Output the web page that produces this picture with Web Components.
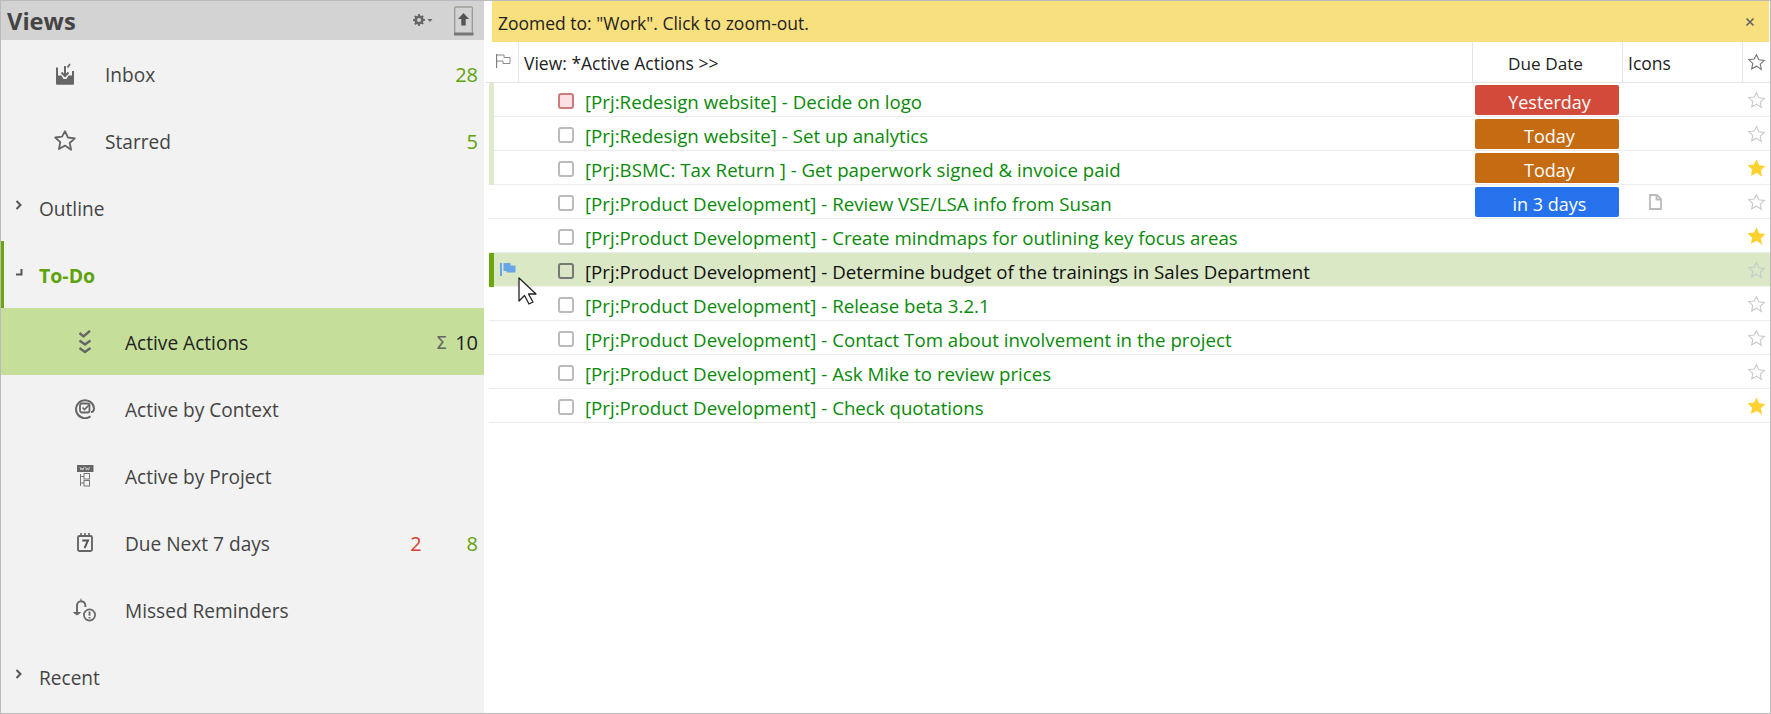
<!DOCTYPE html>
<html>
<head>
<meta charset="utf-8">
<title>Views</title>
<style>
  html, body { margin: 0; height: 100%; background: #fff; }
  body { font-family: "Open Sans", "Liberation Sans", sans-serif; }
</style>
</head>
<body>

<todo-app>
  <view-panel slot="side">
    <view-row icon="inbox" count="28">Inbox</view-row>
    <view-row icon="star" count="5">Starred</view-row>
    <view-row group="closed">Outline</view-row>
    <view-row group="open" current>To-Do</view-row>
    <view-row icon="actions" sub selected sigma count="10">Active Actions</view-row>
    <view-row icon="context" sub>Active by Context</view-row>
    <view-row icon="project" sub>Active by Project</view-row>
    <view-row icon="calendar" sub red="2" count="8">Due Next 7 days</view-row>
    <view-row icon="bell" sub>Missed Reminders</view-row>
    <view-row group="closed">Recent</view-row>
  </view-panel>
  <task-list slot="main">
    <zoom-banner>Zoomed to: "Work". Click to zoom-out.</zoom-banner>
    <list-head>View: *Active Actions &gt;&gt;</list-head>
    <task-row mark="soft" box="overdue" due="Yesterday" tone="red">[Prj:Redesign website] - Decide on logo</task-row>
    <task-row mark="soft" due="Today" tone="orange">[Prj:Redesign website] - Set up analytics</task-row>
    <task-row mark="soft" due="Today" tone="orange" starred>[Prj:BSMC: Tax Return ] - Get paperwork signed &amp; invoice paid</task-row>
    <task-row due="in 3 days" tone="blue" note>[Prj:Product Development] - Review VSE/LSA info from Susan</task-row>
    <task-row starred>[Prj:Product Development] - Create mindmaps for outlining key focus areas</task-row>
    <task-row active>[Prj:Product Development] - Determine budget of the trainings in Sales Department</task-row>
    <task-row>[Prj:Product Development] - Release beta 3.2.1</task-row>
    <task-row>[Prj:Product Development] - Contact Tom about involvement in the project</task-row>
    <task-row>[Prj:Product Development] - Ask Mike to review prices</task-row>
    <task-row starred>[Prj:Product Development] - Check quotations</task-row>
  </task-list>
</todo-app>

<script>
const STAR = 'M12 2.2l2.9 6.3 6.9.8-5.1 4.7 1.4 6.8L12 16.6l-6.1 3.4 1.4-6.8-5.1-4.7 6.9-.8z';

const ICONS = {
  inbox: `<svg width="18" height="22" viewBox="0 0 18 22"><path d="M1 4.500V20.500H17V8" fill="none" stroke="#666" stroke-width="2"/><path d="M1 12.500h4.500l2 3.500h3l2-3.500H17v9H1z" fill="#666"/><path d="M9 3v10M5.500 9.500L9 13l3.500-3.500" fill="none" stroke="#666" stroke-width="2"/><path d="M11.500 4.500L14 1" stroke="#666" stroke-width="1.600"/></svg>`,
  star: `<svg width="24" height="24" viewBox="0 0 24 24"><path d="${STAR}" fill="none" stroke="#666" stroke-width="1.800" stroke-linejoin="round"/></svg>`,
  actions: `<svg width="14" height="24" viewBox="0 0 14 24"><path d="M1.500 3l4 3.500L12 .8M1.500 10.500l5.500 4 5.500-4M1.500 18l5.500 4 5.500-4" fill="none" stroke="#666" stroke-width="2.400"/></svg>`,
  context: `<svg width="20" height="21" viewBox="0 0 20 21"><path d="M15.500 18.400A9 9 0 1 1 19 10.200c0 2.400-1.200 3.800-3 3.800" fill="none" stroke="#666" stroke-width="2"/><rect x="5" y="5.500" width="9.500" height="9" rx="2" fill="none" stroke="#666" stroke-width="1.800"/><path d="M7.500 9.500l2 2 4.500-4.500" fill="none" stroke="#666" stroke-width="1.700"/></svg>`,
  project: `<svg width="17" height="22" viewBox="0 0 17 22"><rect x="0" y="0" width="16.500" height="7" fill="#666"/><path d="M3 2l1 3 1-2 1 2 1-3M8.500 2l1 3 1-2 1 2 1-3" fill="none" stroke="#ddd" stroke-width=".8"/><path d="M3.500 9v12M3.500 11.500H7M3.500 18H7" fill="none" stroke="#777" stroke-width="1"/><rect x="7" y="8.500" width="5.500" height="5.500" fill="none" stroke="#777" stroke-width="1"/><rect x="7" y="15.500" width="5.500" height="5.500" fill="none" stroke="#777" stroke-width="1"/></svg>`,
  calendar: `<svg width="16" height="19" viewBox="0 0 16 19"><rect x="1" y="3" width="14" height="15" rx="1.500" fill="none" stroke="#666" stroke-width="1.900"/><path d="M4 0v3M8 0v3M12 0v3" stroke="#666" stroke-width="1.600"/><path d="M5.200 7.500h5.800L7.600 15" fill="none" stroke="#555" stroke-width="1.900"/></svg>`,
  bell: `<svg width="24" height="24" viewBox="0 0 24 24"><path d="M4 14V7.500a4.200 4.200 0 0 1 8.400 0V9" fill="none" stroke="#666" stroke-width="1.900"/><path d="M.5 14.500h7L4 17zM8 .6v3" fill="#666" stroke="#666"/><circle cx="16.500" cy="17" r="5.600" fill="none" stroke="#666" stroke-width="1.700"/><path d="M16.500 13.500v4.200M16.500 19v1.600" stroke="#666" stroke-width="1.800"/></svg>`
};

class TodoApp extends HTMLElement {
  constructor() {
    super();
    this.attachShadow({ mode: 'open' });
    this.shadowRoot.innerHTML = `
      <style>
        :host { display: grid; grid-template-columns: 483px 1fr; column-gap: 1px; width: 1771px; height: 714px; box-sizing: border-box;
                border: 1px solid #bbb; overflow: hidden; position: relative; background: #fff; }
      </style>
      <slot name="side"></slot>
      <slot name="main"></slot>`;
  }
}

class ViewPanel extends HTMLElement {
  constructor() {
    super();
    this.attachShadow({ mode: 'open' });
    this.shadowRoot.innerHTML = `
      <style>
        :host { display: block; background: #f2f2f2; height: 100%; overflow: hidden; }
        header { height: 39px; background: #d3d3d3; display: flex; align-items: center; padding-left: 6px; box-sizing: border-box; }
        h1 { margin: 0; font: 700 23.7px "Open Sans", sans-serif; color: #444; flex: 1; }
        .gear { display: flex; margin-right: 20px; margin-top: -1px; }
        .pin { width: 21px; height: 30px; margin-right: 10px; display: flex; }
      </style>
      <header>
        <h1>Views</h1>
        <span class="gear">
          <svg width="20" height="12" viewBox="0 0 20 12"><path fill="#666" d="M5.200 0h1.600l.3 1.600 1.200.5L9.700 1.200l1.100 1.100-.9 1.300.5 1.200 1.600.3v1.600l-1.600.3-.5 1.200.9 1.300-1.100 1.100-1.400-.9-1.200.5L6.800 12H5.200l-.3-1.500-1.200-.5-1.400.9L1.200 9.800l.9-1.300-.5-1.200L0 6.900V5.300l1.600-.3.5-1.200-.9-1.300 1.100-1.100 1.400.9 1.200-.5zM6 4a2 2 0 1 0 0 4 2 2 0 0 0 0-4z"/><path fill="#666" d="M14.500 5h5l-2.500 3z"/></svg>
        </span>
        <span class="pin">
          <svg width="21" height="30" viewBox="0 0 21 30"><path d="M2.500 1h16l.8.8V28H1.700V1.800z" fill="#d3d3d3" stroke="#9aa094" stroke-width="1.400"/><rect x="1" y="26.500" width="19.500" height="3" fill="#777"/><path d="M10.500 7l5.500 6h-3.300v6.500H8.300V13H5z" fill="#555"/></svg>
        </span>
      </header>
      <slot></slot>`;
  }
}

class ViewRow extends HTMLElement {
  constructor() {
    super();
    this.attachShadow({ mode: 'open' });
  }

  connectedCallback() {
    const group = this.getAttribute('group');
    const icon = this.getAttribute('icon');
    const red = this.getAttribute('red');
    const count = this.getAttribute('count');
    let lead = '';
    if (group === 'closed') {
      lead = `<svg class="twist" width="8" height="10" viewBox="0 0 8 10"><path d="M1.500 1l4 4-4 4" fill="none" stroke="#555" stroke-width="2"/></svg>`;
    } else if (group === 'open') {
      lead = `<svg class="twist" width="8" height="8" viewBox="0 0 8 8"><path d="M1 6.500h5.500V1" fill="none" stroke="#555" stroke-width="2"/></svg>`;
    } else {
      lead = `<span class="ico">${ICONS[icon]}</span>`;
    }
    this.shadowRoot.innerHTML = `
      <style>
        :host { display: flex; align-items: center; height: 67px; box-sizing: border-box; padding-right: 6px;
                color: #444; font: 19.1px "Open Sans", sans-serif; position: relative; }
        :host([current]) { color: #5fa30a; font-weight: 700; font-size: 19.5px; box-shadow: inset 3px 0 0 #6aa70c; }
        :host([selected]) { background: #c5df9a; color: #222; }
        .ico { width: 104px; padding-left: 52px; padding-right: 28px; box-sizing: border-box; display: flex; justify-content: center; }
        :host([sub]) .ico { width: 124px; padding-left: 68px; padding-right: 24px; }
        .twist { margin: -6px 16px 0 14px; }
        .label { flex: 1; margin-top: 2px; }
        .count { color: #5fa30a; font-size: 20px; margin-top: 2px; }
        :host([selected]) .count { color: #222; }
        .red { color: #d9402f; font-size: 20px; margin: 2px 45px 0 0; }
        .sigma { color: #666; font: 18px "DejaVu Sans", sans-serif; margin: 1px 8px 0 0; }
      </style>
      ${lead}
      <span class="label"><slot></slot></span>
      ${this.hasAttribute('sigma') ? '<span class="sigma">Σ</span>' : ''}
      ${red ? `<span class="red">${red}</span>` : ''}
      ${count ? `<span class="count">${count}</span>` : ''}`;
  }
}

class TaskList extends HTMLElement {
  constructor() {
    super();
    this.attachShadow({ mode: 'open' });
    this.shadowRoot.innerHTML = `
      <style>
        :host { display: flex; flex-direction: column; height: 100%; position: relative; font: 18.7px "Open Sans", sans-serif; min-width: 0; }
        .cursor { position: absolute; left: 33px; top: 276px; }
      </style>
      <slot></slot>
      <svg class="cursor" width="19" height="28" viewBox="0 0 19 28"><path d="M1 1v23l5.500-5.500 4.500 8.500 4-2-4.500-8H18z" fill="#fff" stroke="#222" stroke-width="1.300" stroke-linejoin="round"/></svg>`;
  }
}

class ZoomBanner extends HTMLElement {
  constructor() {
    super();
    this.attachShadow({ mode: 'open' });
    this.shadowRoot.innerHTML = `
      <style>
        :host { display: flex; align-items: center; justify-content: space-between; height: 41px; margin: 0 1px 0 7px; padding: 3px 14px 0 6px;
                box-sizing: border-box; background: #f9e07f; color: #222; font-size: 17.5px; }
        svg { display: block; margin-top: -3px; }
      </style>
      <span><slot></slot></span>
      <svg width="10" height="10" viewBox="0 0 10 10"><path d="M1.500 1.500l7 7M8.500 1.500l-7 7" stroke="#666" stroke-width="1.700"/></svg>`;
  }
}

class ListHead extends HTMLElement {
  constructor() {
    super();
    this.attachShadow({ mode: 'open' });
    this.shadowRoot.innerHTML = `
      <style>
        :host { display: grid; grid-template-columns: 33px 954px 150px 120px 1fr; height: 41px; box-sizing: border-box;
                border-bottom: 1px solid #e4e4e4; color: #222; font-size: 17.5px; }
        div { display: flex; align-items: center; border-left: 1px solid #e4e4e4; box-sizing: border-box; padding: 2px 0 0 5px; }
        .flag { border-left: 0; padding: 0 0 0 11px; }
        .due { justify-content: center; padding: 2px 4px 0 0; font-size: 17.2px; }
        .ico { padding: 0 0 0 4px; }
        svg { display: block; }
      </style>
      <div class="flag"><svg width="15" height="16" viewBox="0 0 15 16"><path d="M.6 0v14" stroke="#777" stroke-width="1.100"/><path d="M1 1h7v2.500h6v6H7V7H1" fill="none" stroke="#888" stroke-width="1"/></svg></div>
      <div><slot></slot></div>
      <div class="due">Due Date</div>
      <div>Icons</div>
      <div class="ico"><svg width="19" height="19" viewBox="0 0 24 24"><path d="${STAR}" fill="none" stroke="#777" stroke-width="1.400"/></svg></div>`;
  }
}

class TaskRow extends HTMLElement {
  constructor() {
    super();
    this.attachShadow({ mode: 'open' });
  }

  connectedCallback() {
    const due = this.getAttribute('due');
    const tone = this.getAttribute('tone');
    const starred = this.hasAttribute('starred');
    this.shadowRoot.innerHTML = `
      <style>
        :host { display: grid; grid-template-columns: 5px 64px 27px 887px 150px 120px 1fr; align-items: center; height: 34px; box-sizing: border-box;
                margin-left: 4px; border-bottom: 1px solid #ececec; color: #0a8a0a; }
        :host([active]) { background: #dae8c6; color: #111; border-bottom-color: #f4f4f4; }
        .mark { align-self: stretch; margin-bottom: -1px; }
        :host([mark="soft"]) .mark { background: #dfeac8; }
        :host([active]) .mark { background: #6aa70c; }
        .flag { display: flex; padding-left: 6px; }
        .box { width: 16px; height: 16px; box-sizing: border-box; border: 2px solid #bbb; border-radius: 3px; margin-top: 2px; }
        :host([box="overdue"]) .box { border-color: #cc7a7a; background: #fde0e3; }
        :host([active]) .box { border-color: #777; }
        .text { white-space: nowrap; margin-top: 3px; }
        .due { height: 30px; margin: 1px 3px 0 3px; border-radius: 2px; display: flex; align-items: center; justify-content: center; color: #fff; padding: 3px 0 0 5px; box-sizing: border-box; font-size: 18px; }
        .red { background: #d34a3a; }
        .orange { background: #c56b12; }
        .blue { background: #2672ec; }
        .note { display: flex; padding-left: 27px; margin-top: 0; }
        .star { display: flex; justify-content: flex-end; padding-right: 4px; margin-top: 2px; }
        svg { display: block; }
      </style>
      <span class="mark"></span>
      <span class="flag">${this.hasAttribute('active') ? '<svg width="16" height="13" viewBox="0 0 16 13"><path d="M1 0v13" stroke="#6aa5e8" stroke-width="2"/><path d="M3.500 0h7v2.500h5v7h-9V8h-3z" fill="#6aa5e8"/></svg>' : ''}</span>
      <span class="box"></span>
      <span class="text"><slot></slot></span>
      ${due ? `<span class="due ${tone}">${due}</span>` : '<span></span>'}
      <span class="note">${this.hasAttribute('note') ? '<svg width="13" height="16" viewBox="0 0 13 16"><path d="M1 1h7l4 4v10H1z" fill="none" stroke="#bbb" stroke-width="1.800"/><path d="M7.500 1v4.500H12" fill="none" stroke="#bbb" stroke-width="1.800"/></svg>' : ''}</span>
      <span class="star"><svg width="19" height="19" viewBox="0 0 24 24"><path d="${STAR}" fill="${starred ? '#ffd12e' : 'none'}" stroke="${starred ? '#ffd12e' : '#c9c9c9'}" stroke-width="1.400"/></svg></span>`;
  }
}

customElements.define('todo-app', TodoApp);
customElements.define('view-panel', ViewPanel);
customElements.define('view-row', ViewRow);
customElements.define('task-list', TaskList);
customElements.define('zoom-banner', ZoomBanner);
customElements.define('list-head', ListHead);
customElements.define('task-row', TaskRow);
</script>
</body>
</html>
